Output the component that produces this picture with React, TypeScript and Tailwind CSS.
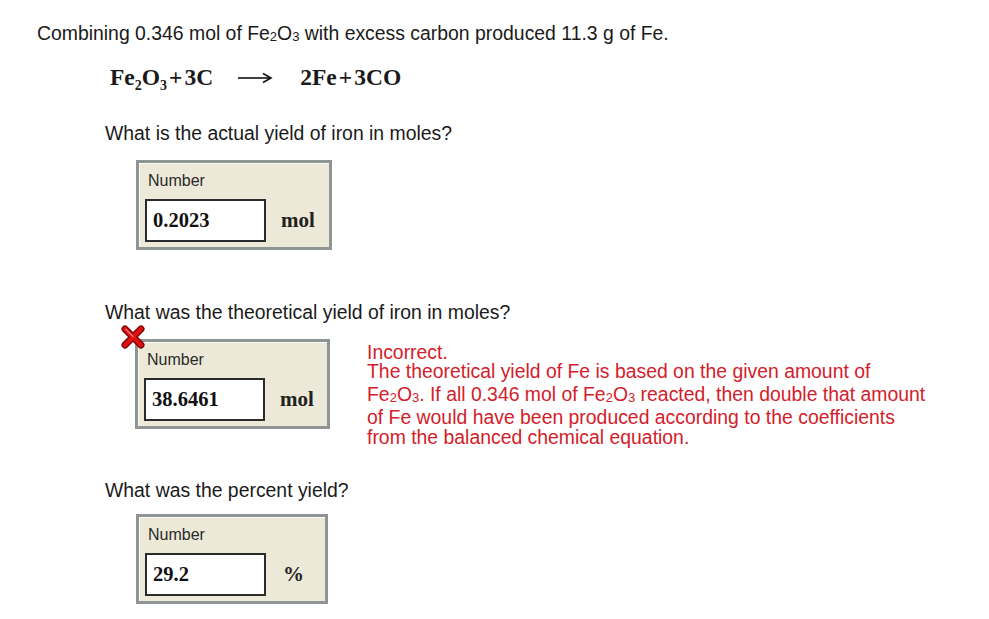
import React from 'react';

const sans = { fontFamily: '"Liberation Sans", Arial, sans-serif' };
const serif = { fontFamily: '"Liberation Serif", "Times New Roman", serif' };

const Sub: React.FC<{ children: React.ReactNode; className?: string }> = ({ children, className = 'text-[13px]' }) => (
  <sub className={`leading-none relative top-[1px] ${className}`}>{children}</sub>
);

const WrongMark = () => (
  <svg width="24" height="24" viewBox="0 0 24 24" className="absolute -left-[17px] -top-[17px]">
    <path d="M4 4 L20 20 M20 4 L4 20" stroke="#7a0000" strokeWidth="7" strokeLinecap="round" />
    <path d="M4 4 L20 20 M20 4 L4 20" stroke="#e01010" strokeWidth="4.5" strokeLinecap="round" />
    <path d="M5 4.5 L12 11.5" stroke="#ff8080" strokeWidth="1.2" strokeLinecap="round" />
  </svg>
);

interface AnswerBoxProps {
  value: string;
  unit: string;
  wrong?: boolean;
  unitGap?: string;
  className?: string;
}

const AnswerBox: React.FC<AnswerBoxProps> = ({ value, unit, wrong, unitGap = 'ml-[15px]', className = '' }) => (
  <div
    className={`relative shrink-0 h-[90px] bg-[#ece9d8] border-[3px] border-[#8d9595] shadow-[inset_1px_1px_0_#fbfaf3] ${className}`}
  >
    {wrong && <WrongMark />}
    <div className="pl-[9px] pt-[8px] text-[16px] leading-[19px] text-[#2a2a2a]" style={sans}>
      Number
    </div>
    <div className="flex items-center mt-[9px] pl-[6px]">
      <div
        className="w-[121px] h-[43px] bg-white border-2 border-[#2b2b2b] flex items-center pl-[6px] text-[20.5px] font-bold text-[#111]"
        style={serif}
      >
        {value}
      </div>
      <div className={`${unitGap} text-[21px] font-bold text-[#222]`} style={serif}>
        {unit}
      </div>
    </div>
  </div>
);

export default function App() {
  return (
    <div className="w-[989px] h-[619px] bg-white text-[#1a1a1a] overflow-hidden" style={sans}>
      <p className="pl-[37px] pt-[22px] text-[19.4px] leading-[22px]">
        Combining 0.346 mol of Fe<Sub>2</Sub>O<Sub>3</Sub> with excess carbon produced 11.3 g of Fe.
      </p>

      <div className="pl-[110px] mt-[21px] flex items-center h-[26px] text-[23.5px] font-bold" style={serif}>
        <span>
          Fe<Sub className="text-[14px] top-[5px]">2</Sub>O<Sub className="text-[14px] top-[5px]">3</Sub>
          <span className="px-[2px]">+</span>3C
        </span>
        <svg width="36" height="12" viewBox="0 0 36 12" className="ml-[24px]">
          <path d="M1 6 H33" stroke="#111" strokeWidth="1.6" />
          <path d="M26 1.5 L34 6 L26 10.5" stroke="#111" strokeWidth="1.6" fill="none" />
        </svg>
        <span className="ml-[27px]">
          2Fe<span className="px-[2px]">+</span>3CO
        </span>
      </div>

      <p className="pl-[105px] mt-[31px] text-[19.4px] leading-[22px]">What is the actual yield of iron in moles?</p>
      <AnswerBox value="0.2023" unit="mol" className="ml-[136px] mt-[16px] w-[196px]" />

      <p className="pl-[105px] mt-[51px] text-[19.4px] leading-[22px]">
        What was the theoretical yield of iron in moles?
      </p>
      <div className="flex h-[90px] mt-[16px]">
        <AnswerBox value="38.6461" unit="mol" wrong className="ml-[135px] w-[195px]" />
        <div className="ml-[37px] mt-[4px] text-[19.4px] leading-[19px] text-[#d4202a] whitespace-nowrap">
          <div className="h-[19px]">Incorrect.</div>
          <div className="h-[23px]">The theoretical yield of Fe is based on the given amount of</div>
          <div className="h-[23px]">
            Fe<Sub>2</Sub>O<Sub>3</Sub>. If all 0.346 mol of Fe<Sub>2</Sub>O<Sub>3</Sub> reacted, then double that amount
          </div>
          <div className="h-[20px]">of Fe would have been produced according to the coefficients</div>
          <div className="h-[19px]">from the balanced chemical equation.</div>
        </div>
      </div>

      <p className="pl-[105px] mt-[50px] text-[19.4px] leading-[22px]">What was the percent yield?</p>
      <AnswerBox value="29.2" unit="%" unitGap="ml-[17px]" className="ml-[136px] mt-[13px] w-[192px]" />
    </div>
  );
}
